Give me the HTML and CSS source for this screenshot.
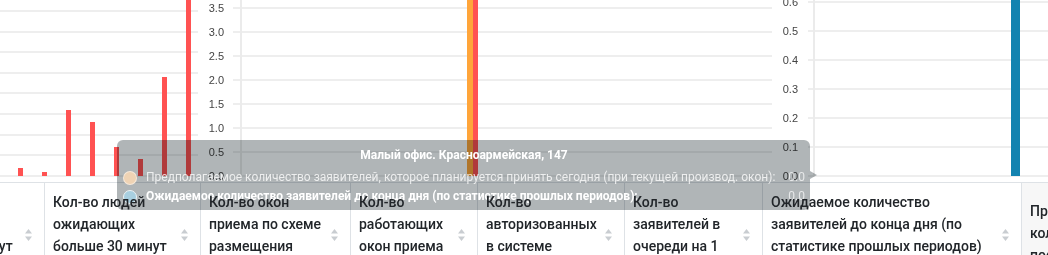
FILE: index.html
```html
<!DOCTYPE html>
<html lang="ru">
<head>
<meta charset="utf-8">
<title>Статистика</title>
<link rel="stylesheet" href="styles.css">
</head>
<body>
<div class="charts">
  <div class="chart chart-left">
    <div class="grid grid-left">
      <div class="area area-left">
        <span class="bar red" style="height:8px"></span>
        <span class="bar red" style="height:4px"></span>
        <span class="bar red" style="height:66px"></span>
        <span class="bar red" style="height:54px"></span>
        <span class="bar red" style="height:29px"></span>
        <span class="bar red" style="height:17px"></span>
        <span class="bar red" style="height:99px"></span>
        <span class="bar red" style="height:176px"></span>
      </div>
    </div>
  </div>
  <div class="chart chart-mid">
    <div class="labels labels-mid">
      <span>3.5</span><span>3.0</span><span>2.5</span><span>2.0</span><span>1.5</span><span>1.0</span><span>0.5</span><span>0.0</span>
    </div>
    <div class="grid grid-mid">
      <div class="area area-mid">
        <span class="bar orange bar-wide" style="height:176px"></span>
        <span class="bar red" style="height:176px"></span>
      </div>
    </div>
  </div>
  <div class="chart chart-right">
    <div class="labels labels-right">
      <span>0.6</span><span>0.5</span><span>0.4</span><span>0.3</span><span>0.2</span><span>0.1</span><span>0.0</span>
    </div>
    <div class="grid grid-right">
      <div class="area area-right">
        <span class="bar blue" style="height:176px"></span>
      </div>
    </div>
  </div>
</div>

<div class="thead">
  <div class="th w1"><div class="th-text">Кол-во людей ожидающих больше 15 минут</div><svg class="sort" viewBox="0 0 7 12"><path d="M3.5 0L7 4.5H0Z M0 7.5H7L3.5 12Z"/></svg></div>
  <div class="th w2"><div class="th-text">Кол-во людей ожидающих больше 30 минут</div><svg class="sort" viewBox="0 0 7 12"><path d="M3.5 0L7 4.5H0Z M0 7.5H7L3.5 12Z"/></svg></div>
  <div class="th w3"><div class="th-text">Кол-во окон приема по схеме размещения</div><svg class="sort" viewBox="0 0 7 12"><path d="M3.5 0L7 4.5H0Z M0 7.5H7L3.5 12Z"/></svg></div>
  <div class="th w4"><div class="th-text">Кол-во работающих окон приема</div><svg class="sort" viewBox="0 0 7 12"><path d="M3.5 0L7 4.5H0Z M0 7.5H7L3.5 12Z"/></svg></div>
  <div class="th w5"><div class="th-text">Кол-во авторизованных в системе</div><svg class="sort" viewBox="0 0 7 12"><path d="M3.5 0L7 4.5H0Z M0 7.5H7L3.5 12Z"/></svg></div>
  <div class="th w6"><div class="th-text">Кол-во заявителей в очереди на 1 окно</div><svg class="sort" viewBox="0 0 7 12"><path d="M3.5 0L7 4.5H0Z M0 7.5H7L3.5 12Z"/></svg></div>
  <div class="th w7"><div class="th-text">Ожидаемое количество заявителей до конца дня (по статистике прошлых периодов)</div><svg class="sort" viewBox="0 0 7 12"><path d="M3.5 0L7 4.5H0Z M0 7.5H7L3.5 12Z"/></svg></div>
  <div class="th w8 th-last"><div class="th-text">Предполагаемое количество посетителей</div><svg class="sort" viewBox="0 0 7 12"><path d="M3.5 0L7 4.5H0Z M0 7.5H7L3.5 12Z"/></svg></div>
</div>

<div class="tip-bg"></div>
<div class="tip">
  <div class="tip-title">Малый офис. Красноармейская, 147</div>
  <div class="tip-row tip-row-1">
    <span class="dot dot-peach"></span>
    <span class="tip-label">Предполагаемое количество заявителей, которое планируется принять сегодня (при текущей производ. окон):</span>
    <span class="tip-value">0.0</span>
  </div>
  <div class="tip-row tip-row-2">
    <span class="dot dot-blue"></span>
    <span class="tip-label">Ожидаемое количество заявителей до конца дня (по статистике прошлых периодов):</span>
    <span class="tip-value">0.0</span>
  </div>
</div>
</body>
</html>
```

FILE: styles.css
```css
* { box-sizing: border-box; }
html, body { margin: 0; padding: 0; }
body {
  width: 1048px;
  height: 255px;
  overflow: hidden;
  background: #fff;
  font-family: Roboto, "Liberation Sans", sans-serif;
  position: relative;
}

/* charts */
.charts { display: flex; height: 177px; }
.chart { display: flex; height: 177px; flex: none; }
.chart-left { width: 198px; }
.chart-mid { width: 574px; }
.chart-right { width: 276px; }

.labels {
  display: flex;
  flex-direction: column;
  align-items: flex-end;
  align-self: flex-start;
  flex: none;
  font: 11px "Liberation Sans", Arial, sans-serif;
  color: #444;
}
.labels-mid { width: 35px; padding-right: 9px; margin-top: -4px; }
.labels-mid span { height: 24px; line-height: 24px; }
.labels-right { width: 36px; padding-right: 10px; margin-top: -12px; }
.labels-right span { height: 29px; line-height: 29px; }

.grid { flex: 1; height: 177px; display: flex; }
.grid-left { background: repeating-linear-gradient(to top, #eeeeee 0 2px, transparent 2px 20.63px); }
.grid-mid { background: repeating-linear-gradient(to top, #eeeeee 0 2px, transparent 2px 24px); }
.grid-right { background: repeating-linear-gradient(to top, #eeeeee 0 2px, transparent 2px 29px); }

.area {
  flex: 1;
  display: flex;
  align-items: flex-end;
  padding-bottom: 1px;
  border-left: 2px solid #ebebeb;
}
.area-left { border-left: 0; padding-left: 18px; gap: 19px; }
.area-mid { margin-left: 7px; padding-left: 225px; }
.area-right { margin-left: 5px; padding-left: 196px; }

.bar { flex: none; width: 5px; display: block; }
.bar-wide { width: 6px; }
.red { background: #ff5252; }
.orange { background: #ffa53a; }
.blue { background: #1383b0; width: 9px; }

/* table header */
.thead {
  display: flex;
  margin-top: 5px;
  margin-left: -110px;
  width: max-content;
  border-top: 1px solid #dee2e6;
}
.th {
  flex: none;
  display: flex;
  align-items: center;
  gap: 6px;
  height: 104px;
  padding: 8px 12px 8px 8px;
  border-left: 1px solid #dee2e6;
}
.th-text {
  flex: 1;
  align-self: flex-start;
  font-size: 14px;
  line-height: 22px;
  font-weight: 500;
  color: #212529;
  position: relative;
  z-index: 4;
}
.sort { flex: none; width: 7px; height: 12px; fill: #c9cdd1; }
.w1 { width: 154px; }
.w2 { width: 156px; }
.w3 { width: 150px; }
.w4 { width: 127px; }
.w5 { width: 147px; }
.w6 { width: 138px; }
.w7 { width: 259px; }
.w8 { width: 150px; }
.th-last { background: #f7f7f7; padding-top: 17px; }

/* tooltip */
.tip-bg {
  position: absolute;
  left: 117px;
  top: 140px;
  width: 693px;
  height: 70px;
  background: #b0b5b7;
  border-radius: 6px;
  mix-blend-mode: multiply;
  z-index: 2;
}
.tip-bg::after {
  content: "";
  position: absolute;
  left: 100%;
  top: 31px;
  border-left: 7px solid #b0b5b7;
  border-top: 4px solid transparent;
  border-bottom: 4px solid transparent;
}
.tip {
  position: absolute;
  left: 117px;
  top: 140px;
  width: 693px;
  height: 70px;
  z-index: 3;
  padding: 6px 5px 0 6px;
  color: #fff;
  font-size: 12px;
}
.tip-title {
  text-align: center;
  font-weight: 700;
  line-height: 19px;
  margin-bottom: 3px;
}
.tip-row { display: flex; align-items: center; height: 19px; line-height: 19px; white-space: nowrap; }
.tip-row-1 .tip-label { color: rgba(255, 255, 255, 0.78); }
.tip-row-2 .tip-label { font-weight: 700; }
.dot {
  flex: none;
  width: 14px;
  height: 14px;
  border-radius: 50%;
  margin-right: 9px;
}
.dot-peach { background: #efd3b4; border: 1.5px solid rgba(255, 255, 255, 0.5); }
.dot-blue { background: #a8cfe0; border: 1.5px solid #edf3f5; }
.tip-value { margin-left: auto; color: rgba(255, 255, 255, 0.7); }
```
